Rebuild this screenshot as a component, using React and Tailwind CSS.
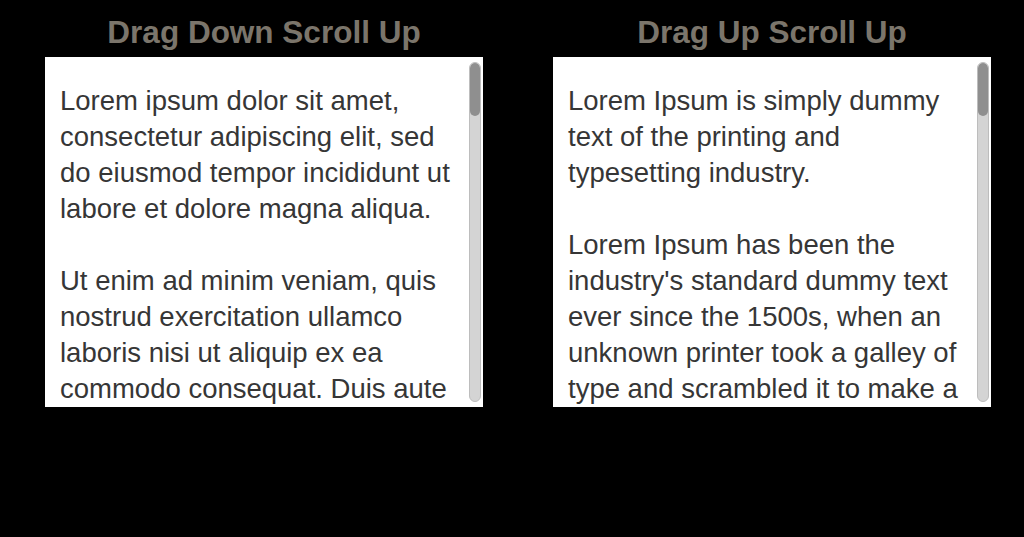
import React from 'react';

const panels = [
  {
    title: 'Drag Down Scroll Up',
    paragraphs: [
      'Lorem ipsum dolor sit amet, consectetur adipiscing elit, sed do eiusmod tempor incididunt ut labore et dolore magna aliqua.',
      'Ut enim ad minim veniam, quis nostrud exercitation ullamco laboris nisi ut aliquip ex ea commodo consequat. Duis aute irure dolor in reprehenderit in voluptate velit esse cillum dolore eu fugiat nulla pariatur.',
    ],
  },
  {
    title: 'Drag Up Scroll Up',
    paragraphs: [
      'Lorem Ipsum is simply dummy text of the printing and typesetting industry.',
      "Lorem Ipsum has been the industry's standard dummy text ever since the 1500s, when an unknown printer took a galley of type and scrambled it to make a type specimen book.",
    ],
  },
];

function ScrollPanel({ title, paragraphs }) {
  return (
    <section className="flex w-[438px] flex-col">
      <h2 className="h-[57px] pt-[12px] text-center text-[31.5px] font-bold leading-[40px] text-[#7b756b]">
        {title}
      </h2>
      <div className="flex h-[350px] overflow-hidden bg-white">
        {/* text column, clipped by the panel */}
        <div className="flex-1 overflow-hidden pl-[15px] pr-[2px] pt-[26px] text-[27.5px] leading-[36px] text-[#363636]">
          {paragraphs.map((p, i) => (
            <p key={i} className="mb-[36px]">
              {p}
            </p>
          ))}
        </div>
        {/* scrollbar track + thumb */}
        <div className="flex w-[14px] shrink-0 flex-col py-[5px] pr-[2px]">
          <div className="flex flex-1 flex-col overflow-hidden rounded-full border border-[#bdbdbd] bg-[#d4d4d4]">
            <div className="h-[53px] rounded-full bg-[#8f8f8f]" />
          </div>
        </div>
      </div>
    </section>
  );
}

export default function App() {
  return (
    <div
      className="flex h-[537px] w-[1024px] gap-[70px] bg-black pl-[45px]"
      style={{ fontFamily: '"Liberation Sans", Arial, sans-serif' }}
    >
      {panels.map((panel) => (
        <ScrollPanel key={panel.title} {...panel} />
      ))}
    </div>
  );
}
